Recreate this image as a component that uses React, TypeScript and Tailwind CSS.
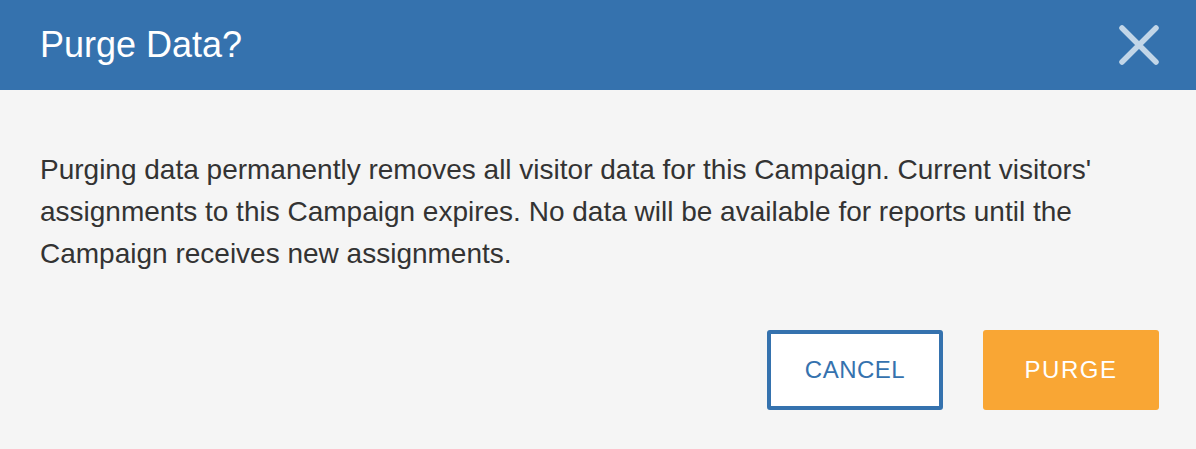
import React from "react";

export default function App() {
    return (
        <div className="w-[1196px] h-[449px] bg-[#f5f5f5] font-['Liberation_Sans',Arial,sans-serif] flex flex-col">
            {/* Header */}
            <div className="h-[90px] bg-[#3572ae] flex items-center justify-between pl-[40px] pr-[37px]">
                <h1 className="text-[36px] text-white leading-none">Purge Data?</h1>
                <button className="w-[40px] h-[40px] flex items-center justify-center">
                    <svg width="40" height="40" viewBox="0 0 40 40" fill="none">
                        <path d="M3 3 L37 37 M37 3 L3 37" stroke="#c2d6e8" strokeWidth="5.5" strokeLinecap="round" />
                    </svg>
                </button>
            </div>

            {/* Body */}
            <div className="px-[40px] pt-[59px]">
                <p className="text-[28px] leading-[42px] text-[#333333]">
                    Purging data permanently removes all visitor data for this Campaign. Current visitors' assignments to this Campaign expires. No data will be available for reports until the Campaign receives new assignments.
                </p>
            </div>

            {/* Actions */}
            <div className="flex justify-end gap-[40px] pr-[37px] mt-[55px]">
                <button className="w-[176px] h-[80px] bg-white border-[4px] border-[#3572ae] rounded-[3px] text-[#3572ae] text-[24px] tracking-[0.5px]">
                    CANCEL
                </button>
                <button className="w-[176px] h-[80px] bg-[#f9a634] rounded-[3px] text-white text-[24px] tracking-[1.5px]">
                    PURGE
                </button>
            </div>
        </div>
    );
}
